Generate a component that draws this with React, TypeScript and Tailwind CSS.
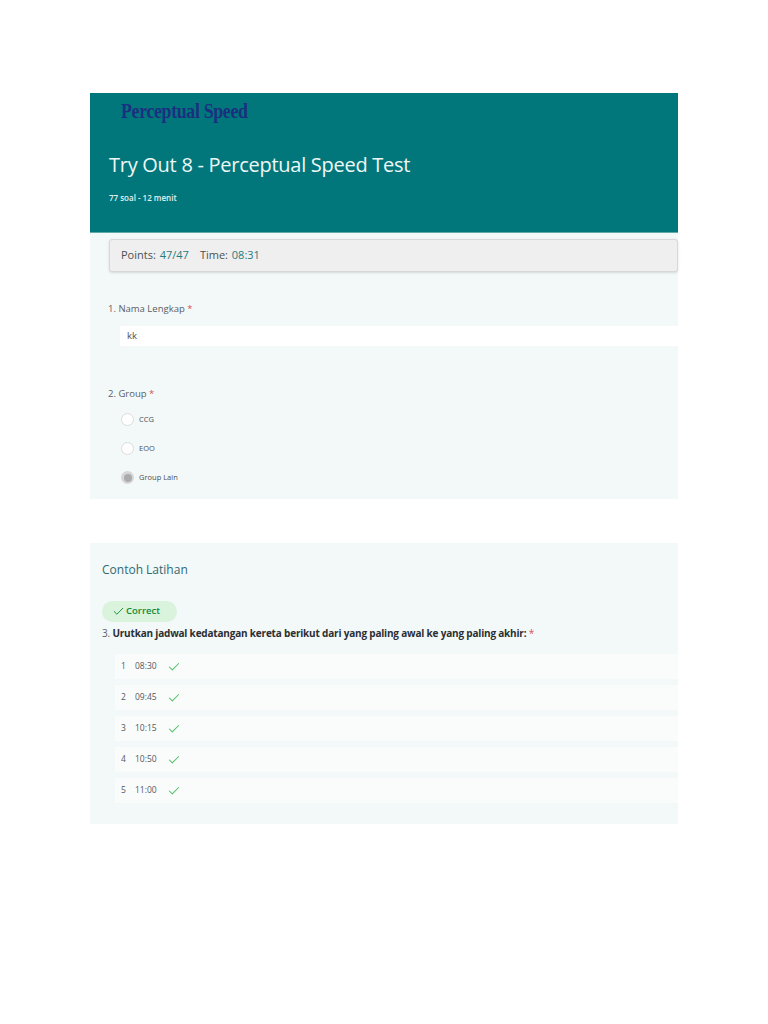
import { Check } from "lucide-react";

const answers = [
  { no: "1", time: "08:30" },
  { no: "2", time: "09:45" },
  { no: "3", time: "10:15" },
  { no: "4", time: "10:50" },
  { no: "5", time: "11:00" },
];

const groups = [
  { label: "CCG", selected: false },
  { label: "EOO", selected: false },
  { label: "Group Lain", selected: true },
];

export default function App() {
  return (
    <div className="min-h-[1024px] bg-white pl-[90px] pt-[93px] font-['Open_Sans',sans-serif] text-[#4b4f52]">
      <div className="w-[588px]">
        <section className="bg-[#f3f8f9]">
          <header className="h-[140px] border-b border-[#5fa9a9] bg-[#02777b]">
            <div className="pl-[31px] pt-[5px] font-['Liberation_Serif',serif] leading-[26px]">
              <span className="inline-block origin-left scale-x-[0.85] text-[21px] font-bold tracking-[-0.4px] text-[#1b2f80]">
                Perceptual Speed
              </span>
            </div>
            <h1 className="pl-[19px] pt-[24px] text-[20px] leading-[30px] tracking-[-0.27px] text-[#eef7f6]">
              Try Out 8 - Perceptual Speed Test
            </h1>
            <p className="pl-[19px] pt-[12px] text-[8px] font-semibold leading-[12px] text-[#e3f0ef]">
              77 soal - 12 menit
            </p>
          </header>

          <div className="pl-[19px] pt-[6px]">
            <div className="flex h-[33px] items-center gap-[11px] rounded-[3px] border border-[#d8d8d8] bg-[#efefef] pl-[11px] text-[11px] shadow-sm">
              <span>
                Points: <span className="ml-[1px] text-[#1f7c80]">47/47</span>
              </span>
              <span>
                Time: <span className="ml-[1px] text-[#1f7c80]">08:31</span>
              </span>
            </div>
          </div>

          <div className="pl-[18px] pt-[30px] text-[9.5px] leading-[14px] text-[#5b5f62]">
            1. Nama Lengkap <span className="text-[#d9534f]">*</span>
          </div>
          <div className="ml-[30px] mt-[10px] flex h-[20px] items-center rounded-l-[2px] bg-white pl-[7px] text-[9.5px] text-[#4b4f52]">
            kk
          </div>

          <div className="pl-[18px] pt-[41px] text-[9.5px] leading-[14px] text-[#5b5f62]">
            2. Group <span className="text-[#d9534f]">*</span>
          </div>
          <div className="flex flex-col gap-[16px] pb-[15px] pl-[31px] pt-[12px]">
            {groups.map((g) => (
              <div key={g.label} className="flex h-[13px] items-center gap-[5px] text-[7.5px] text-[#4b4f52]">
                {g.selected ? (
                  <span className="flex h-[13px] w-[13px] items-center justify-center rounded-full bg-[#d6d6d6]">
                    <span className="h-[8px] w-[8px] rounded-full bg-[#a9abac]" />
                  </span>
                ) : (
                  <span className="h-[13px] w-[13px] rounded-full border border-[#dcdcdc] bg-white" />
                )}
                {g.label}
              </div>
            ))}
          </div>
        </section>

        <section className="mt-[44px] h-[281px] bg-[#f3f8f9]">
          <h2 className="pl-[12px] pt-[18px] text-[12px] leading-[18px] text-[#2f6a72]">Contoh Latihan</h2>
          <div className="ml-[12px] mt-[22px] flex h-[21px] w-[75px] items-center gap-[1px] rounded-full bg-[#daf3dd] pl-[10px] text-[9.5px] font-semibold text-[#0f8a3a]">
            <Check className="h-[13px] w-[13px]" strokeWidth={1.75} aria-hidden="true" />
            Correct
          </div>
          <p className="pl-[12px] pt-[4px] text-[10px] font-bold leading-[15px] tracking-[-0.19px] text-[#2b2f33]">
            <span className="font-normal text-[#5b5f62]">3.</span> Urutkan jadwal kedatangan kereta berikut dari yang paling awal ke yang paling akhir:{" "}
            <span className="font-normal text-[#d9534f]">*</span>
          </p>
          <div className="flex flex-col gap-[6px] pl-[25px] pt-[13px]">
            {answers.map((a) => (
              <div key={a.no} className="flex h-[25px] items-center bg-[#fafbfb] pl-[6px] text-[8.5px] text-[#55595c]">
                <span className="w-[14px]">{a.no}</span>
                <span className="w-[32px]">{a.time}</span>
                <Check className="h-[14px] w-[14px] text-[#4fc068]" strokeWidth={1.75} aria-hidden="true" />
              </div>
            ))}
          </div>
        </section>
      </div>
    </div>
  );
}
